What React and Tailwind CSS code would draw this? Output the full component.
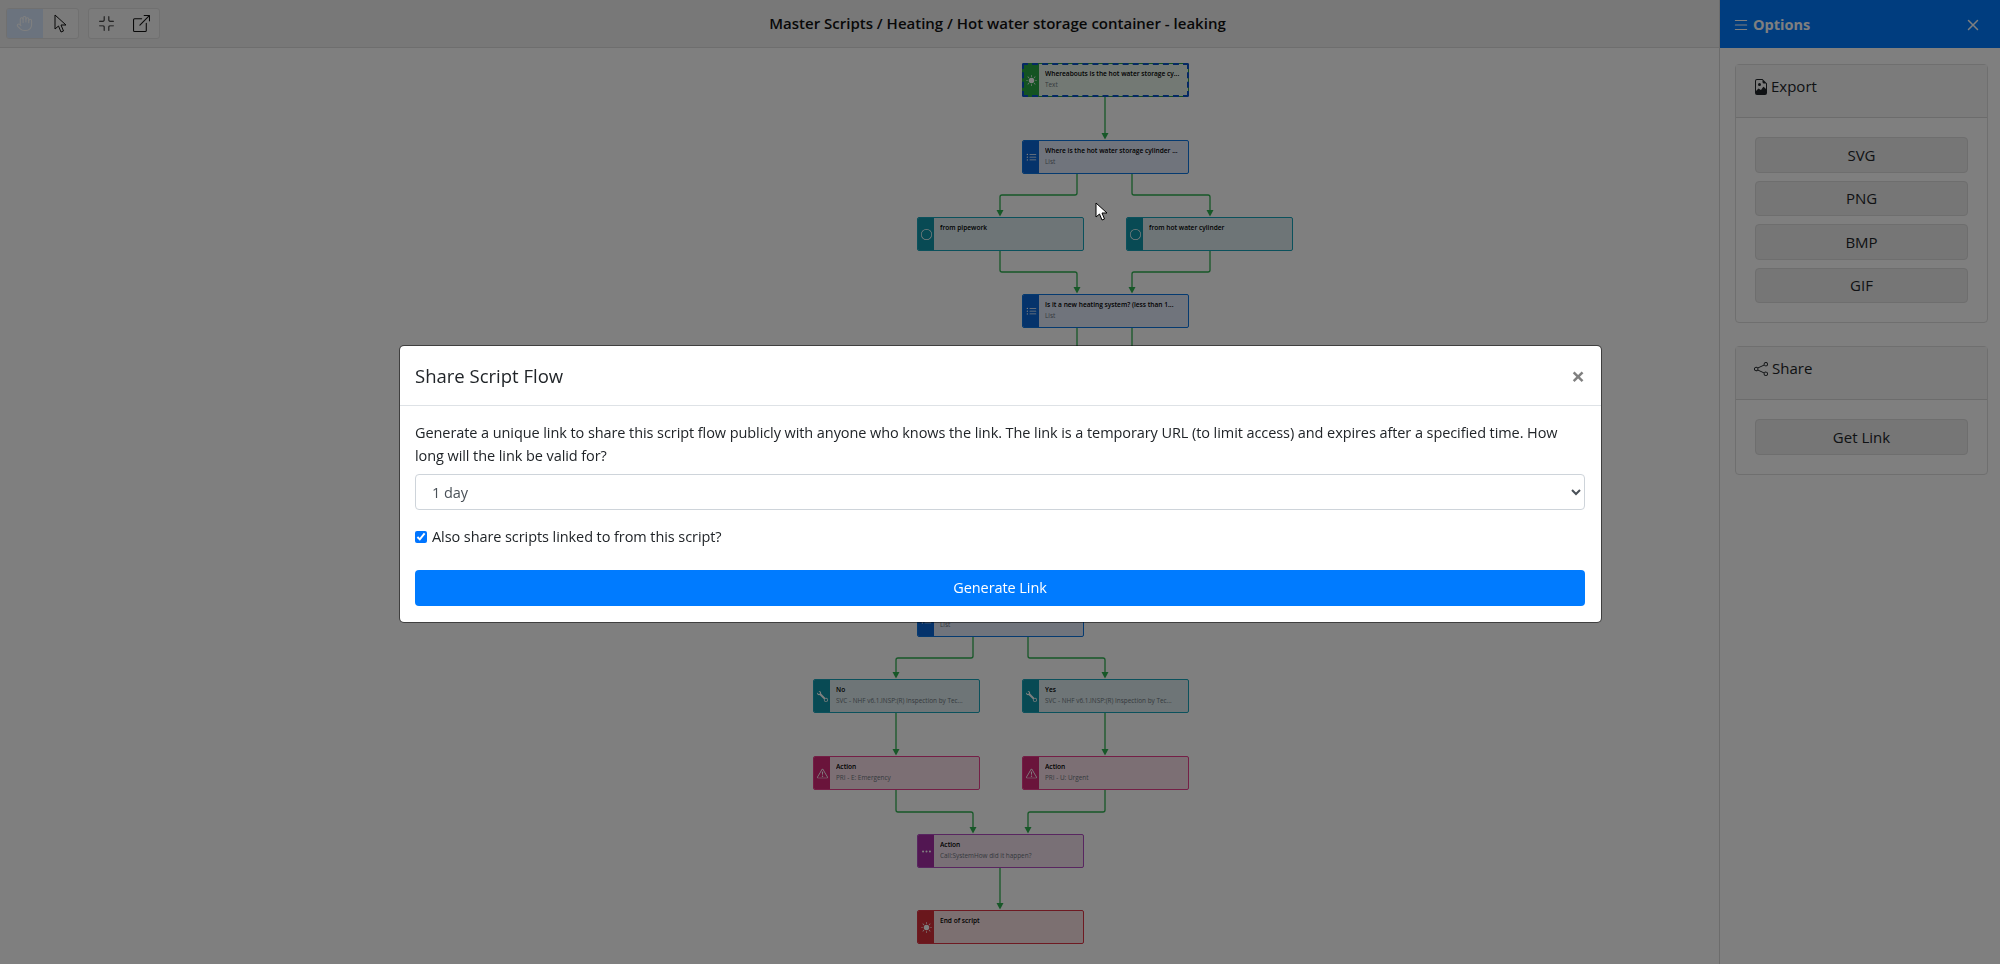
// Script flow editor with the "Share Script Flow" modal open over it.
import { Hand } from "lucide-react";
import {
  BsFullscreenExit,
  BsBoxArrowUpRight,
  BsList,
  BsX,
  BsFileEarmarkImage,
  BsShare,
  BsSunFill,
  BsListUl,
  BsCircle,
  BsWrench,
  BsExclamationTriangle,
  BsThreeDots,
} from "react-icons/bs";

const TYPES = {
  text: { box: "border-[#28a745] bg-[#e6f2e8]", strip: "bg-[#28a745]", Icon: BsSunFill },
  list: { box: "border-[#0a74e0] bg-[#e0e8f8]", strip: "bg-[#0a66d6]", Icon: BsListUl },
  option: { box: "border-[#17a2b8] bg-[#dcebee]", strip: "bg-[#1095a8]", Icon: BsCircle },
  service: { box: "border-[#17a2b8] bg-[#dcebee]", strip: "bg-[#1095a8]", Icon: BsWrench },
  urgent: { box: "border-[#e83e8c] bg-[#f8dfe8]", strip: "bg-[#d42876]", Icon: BsExclamationTriangle },
  call: { box: "border-[#b04cc0] bg-[#f2e0ec]", strip: "bg-[#a42ca4]", Icon: BsThreeDots },
  end: { box: "border-[#dc3545] bg-[#f8e0e2]", strip: "bg-[#d42f38]", Icon: BsSunFill },
};

const NODES = [
  { type: "text", pos: "left-[1022px] top-[15px]", title: "Whereabouts is the hot water storage cy...", sub: "Text", selected: true },
  { type: "list", pos: "left-[1022px] top-[92px]", title: "Where is the hot water storage cylinder ...", sub: "List" },
  { type: "option", pos: "left-[917px] top-[169px]", title: "from pipework" },
  { type: "option", pos: "left-[1126px] top-[169px]", title: "from hot water cylinder" },
  { type: "list", pos: "left-[1022px] top-[246px]", title: "Is it a new heating system? (less than 1...", sub: "List" },
  { type: "list", pos: "left-[917px] top-[555px]", title: "\u00a0", sub: "List" },
  { type: "service", pos: "left-[813px] top-[631px]", title: "No", sub: "SVC - NHF v6.1.INSP:(R) Inspection by Tec..." },
  { type: "service", pos: "left-[1022px] top-[631px]", title: "Yes", sub: "SVC - NHF v6.1.INSP:(R) Inspection by Tec..." },
  { type: "urgent", pos: "left-[813px] top-[708px]", title: "Action", sub: "PRI - E: Emergency" },
  { type: "urgent", pos: "left-[1022px] top-[708px]", title: "Action", sub: "PRI - U: Urgent" },
  { type: "call", pos: "left-[917px] top-[786px]", title: "Action", sub: "Call:SystemHow did it happen?" },
  { type: "end", pos: "left-[917px] top-[862px]", title: "End of script" },
];

// connectors in canvas coordinates: straight [x, y1, y2] or elbow [x1, y1, x2, yMid, y2]
const LINKS = [
  [1105, 49, 86],
  [1077, 126, 1000, 147, 163],
  [1132, 126, 1210, 147, 163],
  [1000, 203, 1077, 224, 240],
  [1210, 203, 1132, 224, 240],
  [973, 589, 896, 610, 625],
  [1028, 589, 1105, 610, 625],
  [896, 665, 702],
  [1105, 665, 702],
  [896, 742, 973, 764, 780],
  [1105, 742, 1028, 764, 780],
  [1000, 820, 856],
];

function linkPath(l) {
  if (l.length === 3) return `M${l[0]} ${l[1]}V${l[2]}`;
  const [x1, y1, x2, mid, y2] = l;
  const s = x2 > x1 ? 2 : -2;
  return `M${x1} ${y1}V${mid - 2}Q${x1} ${mid} ${x1 + s} ${mid}H${x2 - s}Q${x2} ${mid} ${x2} ${mid + 2}V${y2}`;
}

function FlowNode({ node }) {
  const t = TYPES[node.type];
  return (
    <div
      className={`absolute flex h-[34px] w-[167px] overflow-hidden rounded-[2px] border ${node.pos} ${t.box} ${
        node.selected ? "outline-2 outline-dashed -outline-offset-2 outline-[#0a52c8]" : ""
      }`}
    >
      <div className={`flex w-[16px] shrink-0 items-center justify-center text-white ${t.strip}`}>
        <t.Icon className="text-[11px]" />
      </div>
      <div className="min-w-0 flex-1 pl-[6px] pt-[5px] leading-[10px]">
        <div className="truncate text-[6.6px] font-semibold text-black">{node.title}</div>
        {node.sub && <div className="mt-px truncate text-[6.4px] text-[#6c757d]">{node.sub}</div>}
      </div>
    </div>
  );
}

function Connectors() {
  return (
    <svg className="absolute inset-0 h-full w-full" fill="none">
      {/* stubs running in under the modal */}
      <path d="M1077 280V320M1132 280V320" stroke="#2eb050" strokeWidth="1.3" />
      {LINKS.map((l, i) => {
        const x = l.length === 3 ? l[0] : l[2];
        const y = l[l.length - 1];
        return (
          <g key={i}>
            <path d={linkPath(l)} stroke="#2eb050" strokeWidth="1.3" />
            <path d={`M${x - 3.5} ${y - 1}h7l-3.5 6.5z`} fill="#2eb050" />
          </g>
        );
      })}
    </svg>
  );
}

function Arrow({ className, fill, stroke }) {
  return (
    <svg className={className} width="13" height="19" viewBox="0 0 13 19">
      <path d="M1 1v14l3.5-3 2.5 6 2.5-1-2.5-6h5z" fill={fill} stroke={stroke} strokeWidth="1" />
    </svg>
  );
}

function Toolbar() {
  const btn = "flex h-full flex-1 items-center justify-center";
  return (
    <header className="flex h-12 shrink-0 items-center border-b border-[#dcdcdc] bg-[#f0f0f0] pl-[6px]">
      <div className="flex h-[31px] w-[73px] overflow-hidden rounded-[3px] border border-[#e0e0e0] bg-[#f6f6f6]">
        <div className={`${btn} bg-[#d6e6fc] text-white`}>
          <Hand size={17} strokeWidth={1.5} />
        </div>
        <div className={`${btn} text-[#111]`}>
          <Arrow fill="none" stroke="#111" />
        </div>
      </div>
      <div className="ml-[9px] flex h-[31px] w-[72px] rounded-[3px] border border-[#e0e0e0] bg-[#f6f6f6] text-[#111]">
        <div className={btn}>
          <BsFullscreenExit className="text-[15px]" />
        </div>
        <div className={btn}>
          <BsBoxArrowUpRight className="text-[17px]" />
        </div>
      </div>
      <h1 className="flex-1 pl-[116px] text-center text-[15px] font-semibold text-[#111]">
        Master Scripts / Heating / Hot water storage container - leaking
      </h1>
    </header>
  );
}

function PanelCard({ icon, title, items }) {
  return (
    <section className="rounded-[4px] border border-[#dedede]">
      <div className="flex h-[53px] items-center border-b border-[#d8d8d8] bg-[#f6f6f6] pb-[9px] pl-[17px] text-[15px] text-[#212529]">
        {icon}
        {title}
      </div>
      <div className="flex flex-col gap-[8px] p-[19px]">
        {items.map((label) => (
          <button key={label} className="h-[35.5px] rounded-[4px] border border-[#dcdcdc] bg-[#ececec] text-[15px] text-[#212529]">
            {label}
          </button>
        ))}
      </div>
    </section>
  );
}

function OptionsPanel() {
  return (
    <aside className="flex w-[281px] shrink-0 flex-col border-l border-[#d8d8d8] bg-white">
      <div className="flex h-12 items-center justify-between bg-[#007bff] pl-[12px] pr-[15px] pt-px text-white">
        <div className="flex items-center gap-[3px] text-[14.5px] font-bold">
          <BsList className="text-[18px]" />
          Options
        </div>
        <BsX className="text-[24px]" />
      </div>
      <div className="flex flex-col gap-[23px] pl-[15px] pr-[12px] pt-[16px]">
        <PanelCard
          icon={<BsFileEarmarkImage className="mr-[2px] text-[16px]" />}
          title="Export"
          items={["SVG", "PNG", "BMP", "GIF"]}
        />
        <PanelCard icon={<BsShare className="ml-[1px] mr-[4px] text-[14px]" />} title="Share" items={["Get Link"]} />
      </div>
    </aside>
  );
}

function ShareModal() {
  return (
    <div className="fixed inset-0 flex items-start justify-center bg-black/50 pt-[345px]">
      <div className="ml-px w-[1203px] rounded-[5px] border border-black/50 bg-white bg-clip-padding text-[14.5px] tracking-[-0.08px] text-[#212529]">
        <div className="flex h-[60px] items-center justify-between border-b border-[#dee2e6] pl-[15px] pr-[16px]">
          <h2 className="text-[18.5px] tracking-normal">Share Script Flow</h2>
          <span className="text-[24px] font-bold leading-none text-black/50">×</span>
        </div>
        <div className="pb-[16px] pl-[15px] pr-[16px] pt-[15px]">
          <p className="leading-[23px]">
            Generate a unique link to share this script flow publicly with anyone who knows the link. The link is a
            temporary URL (to limit access) and expires after a specified time. How long will the link be valid for?
          </p>
          <select
            defaultValue="1 day"
            className="mt-[7px] block h-[36px] w-full rounded-[4px] border border-[#ced4da] bg-white px-[12px] text-[14.5px] text-[#495057]"
          >
            <option>1 day</option>
            <option>1 week</option>
            <option>1 month</option>
          </select>
          <label className="mt-[15px] flex h-[24px] items-center gap-[5px]">
            <input type="checkbox" defaultChecked className="m-0 h-[12px] w-[12px]" />
            Also share scripts linked to from this script?
          </label>
          <button className="mt-[21px] block h-[36px] w-full rounded-[4px] bg-[#007bff] text-[14.5px] text-white">
            Generate Link
          </button>
        </div>
      </div>
    </div>
  );
}

export default function App() {
  return (
    <div className="flex h-screen w-full overflow-hidden bg-white font-['Open_Sans',sans-serif]">
      <div className="flex min-w-0 flex-1 flex-col">
        <Toolbar />
        <main className="relative flex-1">
          <Connectors />
          {NODES.map((n, i) => (
            <FlowNode key={i} node={n} />
          ))}
        </main>
      </div>
      <OptionsPanel />
      <ShareModal />
      {/* the mouse pointer caught in the screenshot */}
      <Arrow className="fixed left-[1095px] top-[202px]" fill="#fff" stroke="#000" />
    </div>
  );
}
